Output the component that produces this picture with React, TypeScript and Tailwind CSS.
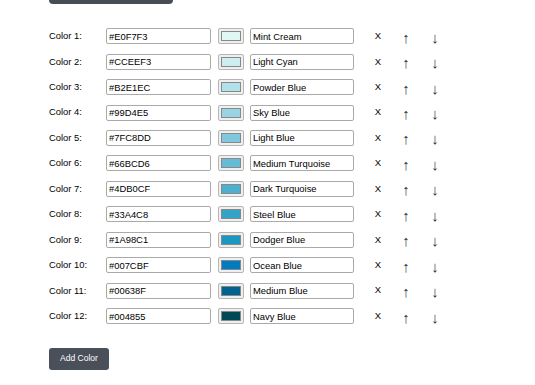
import { useState } from 'react';

type ColorEntry = { hex: string; name: string };

const INITIAL_COLORS: ColorEntry[] = [
  { hex: '#E0F7F3', name: 'Mint Cream' },
  { hex: '#CCEEF3', name: 'Light Cyan' },
  { hex: '#B2E1EC', name: 'Powder Blue' },
  { hex: '#99D4E5', name: 'Sky Blue' },
  { hex: '#7FC8DD', name: 'Light Blue' },
  { hex: '#66BCD6', name: 'Medium Turquoise' },
  { hex: '#4DB0CF', name: 'Dark Turquoise' },
  { hex: '#33A4C8', name: 'Steel Blue' },
  { hex: '#1A98C1', name: 'Dodger Blue' },
  { hex: '#007CBF', name: 'Ocean Blue' },
  { hex: '#00638F', name: 'Medium Blue' },
  { hex: '#004855', name: 'Navy Blue' },
];

export default function App() {
  const [colors, setColors] = useState<ColorEntry[]>(INITIAL_COLORS);

  function update(i: number, patch: Partial<ColorEntry>) {
    setColors((prev) => prev.map((c, j) => (j === i ? { ...c, ...patch } : c)));
  }

  function move(i: number, dir: -1 | 1) {
    setColors((prev) => {
      const t = i + dir;
      if (t < 0 || t >= prev.length) return prev;
      const next = [...prev];
      [next[i], next[t]] = [next[t], next[i]];
      return next;
    });
  }

  return (
    <div className="min-h-[385px] bg-white pl-[49px] font-['Liberation_Sans',Arial,sans-serif] text-black">
      <button
        type="button"
        className="mt-[-24px] block h-[28px] w-[124px] rounded-[4px] bg-[#484c54]"
      />
      <div className="mt-[19.5px]">
        {colors.map((c, i) => (
          <div key={i} className="flex h-[25.45px] items-center text-[9.4px]">
            <label className="w-[57px] shrink-0">Color {i + 1}:</label>
            <input
              value={c.hex}
              onChange={(e) => update(i, { hex: e.target.value })}
              className="h-[16px] w-[105px] rounded-[2px] border border-[#aaa] px-[2px] outline-none"
            />
            <div className="ml-[7px] flex h-[16px] w-[26px] items-center justify-center rounded-[2px] border border-[#b5b5b5] bg-[#efefef]">
              <div
                className="h-[10px] w-[20px] border border-[#888]"
                style={{ backgroundColor: c.hex }}
              />
            </div>
            <input
              value={c.name}
              onChange={(e) => update(i, { name: e.target.value })}
              className="ml-[6px] h-[16px] w-[104px] rounded-[2px] border border-[#aaa] px-[2px] outline-none"
            />
            <button
              type="button"
              onClick={() => setColors((prev) => prev.filter((_, j) => j !== i))}
              className="ml-[20px] w-[8px] text-[9.5px]"
            >
              X
            </button>
            <button
              type="button"
              onClick={() => move(i, -1)}
              className="ml-[16px] mt-[2px] w-[16px] text-[15px] leading-none text-[#333]"
            >
              ↑
            </button>
            <button
              type="button"
              onClick={() => move(i, 1)}
              className="ml-[13px] mt-[2px] w-[16px] text-[15px] leading-none text-[#333]"
            >
              ↓
            </button>
          </div>
        ))}
      </div>
      <button
        type="button"
        onClick={() => setColors((prev) => [...prev, { hex: '#FFFFFF', name: 'White' }])}
        className="mt-[19px] h-[22px] w-[60px] rounded-[3px] bg-[#4a5059] text-[8.5px] text-white"
      >
        Add Color
      </button>
    </div>
  );
}
